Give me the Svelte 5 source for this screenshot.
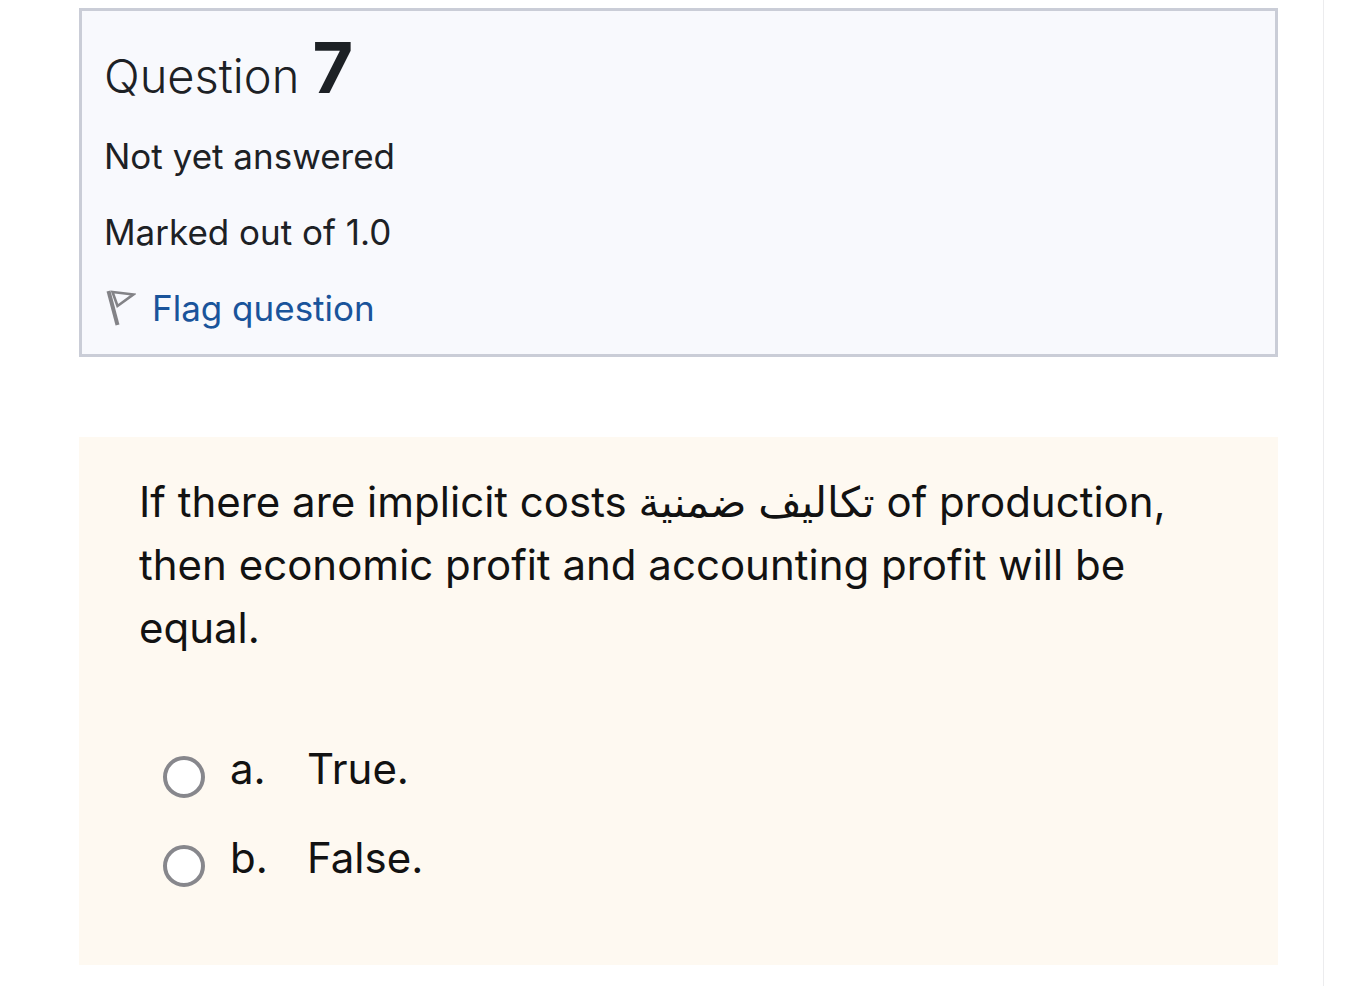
<script lang="ts">
  let selected = $state('');

  const question = {
    number: 7,
    state: 'Not yet answered',
    grade: 'Marked out of 1.0',
    text: 'If there are implicit costs تكاليف ضمنية of production, then economic profit and accounting profit will be equal.'
  };

  const answers = [
    { value: '0', letter: 'a.', text: 'True.' },
    { value: '1', letter: 'b.', text: 'False.' }
  ];
</script>

<main class="page">
  <section class="info">
    <h3>Question <span class="qno">{question.number}</span></h3>
    <div class="state">{question.state}</div>
    <div class="grade">{question.grade}</div>
    <a class="flag" href="#flag">
      <svg class="flag-icon" viewBox="0 0 32 38" aria-hidden="true">
        <path d="M4.5 2L13.5 36" fill="none" stroke="#838387" stroke-width="4" />
        <path d="M8.5 3L29.5 5.4L13.5 17Z" fill="none" stroke="#838387" stroke-width="2.6" />
      </svg>
      <span>Flag question</span>
    </a>
  </section>

  <section class="formulation">
    <p class="qtext">{question.text}</p>
    <div class="answers" role="radiogroup" aria-label="Answer">
      {#each answers as answer}
        <label class="answer">
          <input type="radio" name="answer" value={answer.value} bind:group={selected} />
          <span class="letter">{answer.letter}</span>
          <span>{answer.text}</span>
        </label>
      {/each}
    </div>
  </section>
</main>

<style>
  :global(body) {
    margin: 0;
    background: #fff;
  }

  .page {
    box-sizing: border-box;
    min-height: 100vh;
    margin-right: 26px;
    padding: 8px 45px 20px 79px;
    border-right: 1px solid #ececee;
    font-family: Inter, "Noto Sans", "DejaVu Sans", sans-serif;
    color: #1d2125;
  }

  .info {
    padding: 32px 22px 22px;
    border: 3px solid #cacdd7;
    background: #f8f9fd;
    font-size: 35px;
    line-height: 48px;
  }

  h3 {
    margin: 0 0 23px;
    font-size: 47px;
    line-height: 66px;
    font-weight: 300;
  }

  .qno {
    font-size: 70px;
    line-height: 48px;
    font-weight: 700;
  }

  .state,
  .grade {
    margin-bottom: 28px;
  }

  .flag {
    display: flex;
    align-items: center;
    gap: 16px;
    color: #1a549b;
    text-decoration: none;
  }

  .flag-icon {
    width: 32px;
    height: 38px;
  }

  .formulation {
    margin-top: 80px;
    padding: 33px 60px 76px;
    background: #fef9f1;
    color: #121212;
    font-size: 42px;
    line-height: 63px;
  }

  .qtext {
    margin: 0 0 78px;
  }

  .answers {
    display: flex;
    flex-direction: column;
    gap: 26px;
    padding-left: 24px;
  }

  .answer {
    display: flex;
    align-items: center;
  }

  .letter {
    width: 77px;
  }

  input {
    appearance: none;
    box-sizing: border-box;
    width: 42px;
    height: 42px;
    margin: 16px 25px 0 0;
    border: 4px solid #87878c;
    border-radius: 50%;
    background: #fff;
  }

  input:checked {
    background: radial-gradient(#1a549b 45%, #fff 50%);
  }
</style>
